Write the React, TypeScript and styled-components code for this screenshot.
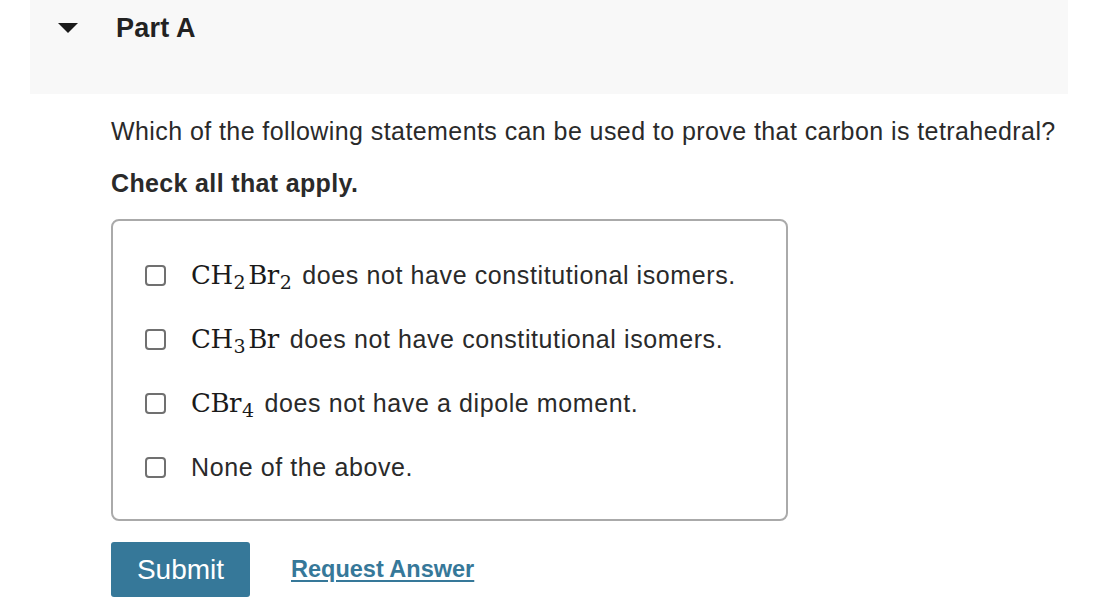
import styled, { createGlobalStyle } from "styled-components";

const GlobalStyle = createGlobalStyle`
  body {
    margin: 0;
    background: #fff;
    font-family: "Liberation Sans", Arial, sans-serif;
    color: #2a2a2a;
  }
`;

const options = [
  { id: "a", formula: ["CH", "2", "Br", "2"], text: "does not have constitutional isomers." },
  { id: "b", formula: ["CH", "3", "Br", ""], text: "does not have constitutional isomers." },
  { id: "c", formula: ["CBr", "4"], text: "does not have a dipole moment." },
  { id: "d", formula: [], text: "None of the above." },
];

const Formula = ({ parts }: { parts: string[] }) => {
  const out = [];
  for (let i = 0; i < parts.length; i += 2) {
    out.push(
      <Group key={i}>
        {parts[i]}
        {parts[i + 1] ? <Sub>{parts[i + 1]}</Sub> : null}
      </Group>
    );
  }
  return <MathText>{out}</MathText>;
};

const App = () => {
  return (
    <Page>
      <GlobalStyle />
      <Header>
        <Caret />
        <PartTitle>Part A</PartTitle>
      </Header>
      <Body>
        <Question>Which of the following statements can be used to prove that carbon is tetrahedral?</Question>
        <Instruction>Check all that apply.</Instruction>
        <OptionsBox>
          {options.map((o) => (
            <OptionRow key={o.id}>
              <Box type="checkbox" />
              {o.formula.length > 0 && <Formula parts={o.formula} />}
              <span>{o.text}</span>
            </OptionRow>
          ))}
        </OptionsBox>
        <Actions>
          <SubmitButton>Submit</SubmitButton>
          <RequestLink href="#">Request Answer</RequestLink>
        </Actions>
      </Body>
    </Page>
  );
};

const Page = styled.div`
  width: 1104px;
  height: 616px;
  overflow: hidden;
`;

const Header = styled.div`
  display: flex;
  align-items: flex-start;
  margin-left: 30px;
  width: 1038px;
  height: 94px;
  background: #f8f8f8;
`;

const Caret = styled.div`
  width: 0;
  height: 0;
  margin: 23px 0 0 28px;
  border-left: 10px solid transparent;
  border-right: 10px solid transparent;
  border-top: 10px solid #1a1a1a;
`;

const PartTitle = styled.h2`
  margin: 12px 0 0 38px;
  font-size: 27px;
  line-height: 32px;
  font-weight: 700;
  letter-spacing: 0.2px;
  color: #222;
`;

const Body = styled.div`
  padding-left: 111px;
`;

const Question = styled.p`
  margin: 22px 0 0;
  font-size: 25px;
  line-height: 30px;
  letter-spacing: 0.42px;
  color: #2a2a2a;
`;

const Instruction = styled.p`
  margin: 22px 0 0;
  font-size: 25px;
  line-height: 30px;
  letter-spacing: 0.35px;
  font-weight: 700;
  color: #2a2a2a;
`;

const OptionsBox = styled.div`
  box-sizing: border-box;
  width: 677px;
  height: 302px;
  margin-top: 21px;
  padding: 32px 0 0 32px;
  border: 2px solid #aaa;
  border-radius: 8px;
  display: flex;
  flex-direction: column;
  gap: 20px;
`;

const OptionRow = styled.label`
  display: flex;
  align-items: center;
  height: 44px;
  font-size: 25px;
  letter-spacing: 0.6px;
  color: #2a2a2a;
`;

const Box = styled.input`
  appearance: none;
  box-sizing: border-box;
  width: 21px;
  height: 21px;
  margin: 0 25px 0 0;
  border: 2px solid #707070;
  border-radius: 4px;
  background: #fff;
`;

const MathText = styled.span`
  display: inline-flex;
  align-items: baseline;
  gap: 3px;
  margin-right: 11px;
  font-family: "DejaVu Serif", "Liberation Serif", serif;
  font-size: 26px;
  letter-spacing: -0.5px;
  color: #1a1a1a;
`;

const Group = styled.span`
  white-space: nowrap;
`;

const Sub = styled.sub`
  font-size: 19px;
  vertical-align: -5px;
  line-height: 0;
  margin-left: 1px;
`;

const Actions = styled.div`
  display: flex;
  align-items: center;
  gap: 41px;
  margin-top: 21px;
`;

const SubmitButton = styled.button`
  width: 139px;
  height: 55px;
  border: none;
  border-radius: 3px;
  background: #367899;
  color: #fff;
  font-family: "Liberation Sans", Arial, sans-serif;
  font-size: 28px;
`;

const RequestLink = styled.a`
  font-size: 23.5px;
  font-weight: 700;
  color: #367899;
  text-decoration: underline;
  text-underline-offset: 3px;
`;

export default App;
